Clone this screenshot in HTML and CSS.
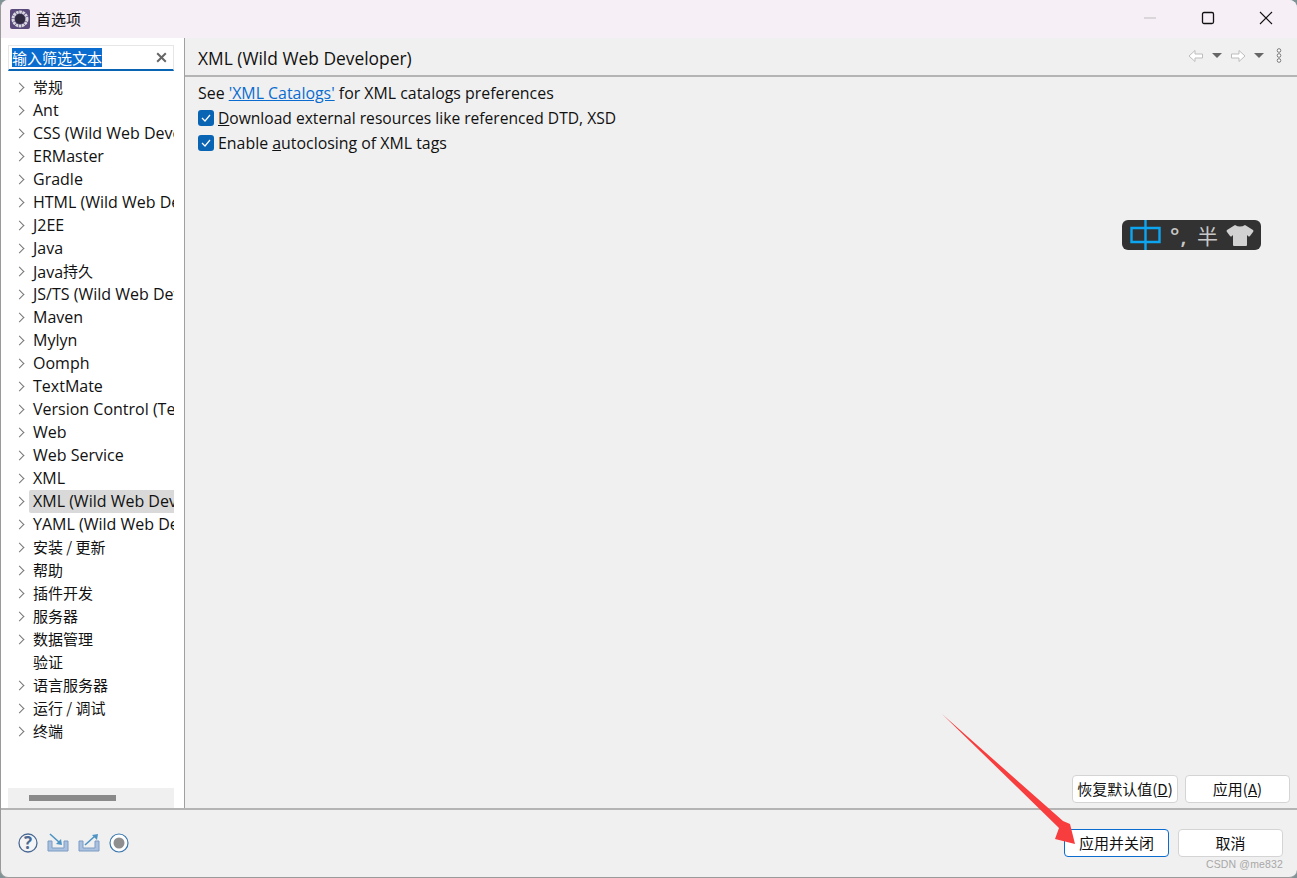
FILE: index.html
```html
<!DOCTYPE html>
<html lang="zh">
<head>
<meta charset="utf-8">
<title>首选项</title>
<link rel="stylesheet" href="styles.css">
</head>
<body>
<div class="window">
  <header class="titlebar">
    <svg class="app-icon" width="20" height="20" viewBox="0 0 20 20">
      <rect width="20" height="20" rx="2" fill="#5a4a7c"/>
      <circle cx="10" cy="10" r="7" fill="none" stroke="#d8d8de" stroke-width="3" stroke-dasharray="2.600 .6"/>
      <circle cx="10" cy="10" r="5" fill="#2f2a40"/>
    </svg>
    <span class="app-title">首选项</span>
    <div class="win-controls">
      <svg class="win-btn" width="14" height="14" viewBox="0 0 14 14"><path d="M1 7h12" stroke="#bdbdbd" stroke-width="1"/></svg>
      <svg class="win-btn" width="14" height="14" viewBox="0 0 14 14"><rect x="1.500" y="1.500" width="11" height="11" rx="1.500" fill="none" stroke="#111" stroke-width="1.300"/></svg>
      <svg class="win-btn" width="14" height="14" viewBox="0 0 14 14"><path d="M1 1l12 12M13 1L1 13" stroke="#111" stroke-width="1.100"/></svg>
    </div>
  </header>
  <div class="main">
    <aside class="sidebar">
      <div class="filter">
        <span class="filter-text">输入筛选文本</span>
        <svg class="filter-clear" width="11" height="11" viewBox="0 0 11 11"><path d="M1.200 1.200l8.600 8.600M9.800 1.200L1.200 9.800" stroke="#666" stroke-width="2"/></svg>
      </div>
      <ul class="tree">
        <li class="tree-row"><span class="chev"></span><span class="tree-label"><span class="cjk">常规</span></span></li>
        <li class="tree-row"><span class="chev"></span><span class="tree-label">Ant</span></li>
        <li class="tree-row"><span class="chev"></span><span class="tree-label">CSS (Wild Web Developer)</span></li>
        <li class="tree-row"><span class="chev"></span><span class="tree-label">ERMaster</span></li>
        <li class="tree-row"><span class="chev"></span><span class="tree-label">Gradle</span></li>
        <li class="tree-row"><span class="chev"></span><span class="tree-label">HTML (Wild Web Developer)</span></li>
        <li class="tree-row"><span class="chev"></span><span class="tree-label">J2EE</span></li>
        <li class="tree-row"><span class="chev"></span><span class="tree-label">Java</span></li>
        <li class="tree-row"><span class="chev"></span><span class="tree-label">Java<span class="cjk">持久</span></span></li>
        <li class="tree-row"><span class="chev"></span><span class="tree-label">JS/TS (Wild Web Developer)</span></li>
        <li class="tree-row"><span class="chev"></span><span class="tree-label">Maven</span></li>
        <li class="tree-row"><span class="chev"></span><span class="tree-label">Mylyn</span></li>
        <li class="tree-row"><span class="chev"></span><span class="tree-label">Oomph</span></li>
        <li class="tree-row"><span class="chev"></span><span class="tree-label">TextMate</span></li>
        <li class="tree-row"><span class="chev"></span><span class="tree-label">Version Control (Team)</span></li>
        <li class="tree-row"><span class="chev"></span><span class="tree-label">Web</span></li>
        <li class="tree-row"><span class="chev"></span><span class="tree-label">Web Service</span></li>
        <li class="tree-row"><span class="chev"></span><span class="tree-label">XML</span></li>
        <li class="tree-row is-selected"><span class="chev"></span><span class="tree-label">XML (Wild Web Developer)</span></li>
        <li class="tree-row"><span class="chev"></span><span class="tree-label">YAML (Wild Web Developer)</span></li>
        <li class="tree-row"><span class="chev"></span><span class="tree-label"><span class="cjk">安装 / 更新</span></span></li>
        <li class="tree-row"><span class="chev"></span><span class="tree-label"><span class="cjk">帮助</span></span></li>
        <li class="tree-row"><span class="chev"></span><span class="tree-label"><span class="cjk">插件开发</span></span></li>
        <li class="tree-row"><span class="chev"></span><span class="tree-label"><span class="cjk">服务器</span></span></li>
        <li class="tree-row"><span class="chev"></span><span class="tree-label"><span class="cjk">数据管理</span></span></li>
        <li class="tree-row"><span class="chev chev-none"></span><span class="tree-label"><span class="cjk">验证</span></span></li>
        <li class="tree-row"><span class="chev"></span><span class="tree-label"><span class="cjk">语言服务器</span></span></li>
        <li class="tree-row"><span class="chev"></span><span class="tree-label"><span class="cjk">运行 / 调试</span></span></li>
        <li class="tree-row"><span class="chev"></span><span class="tree-label"><span class="cjk">终端</span></span></li>
      </ul>
      <div class="hscroll"><div class="hscroll-thumb"></div></div>
    </aside>
    <section class="content">
      <div class="content-head">
        <h1 class="content-title">XML (Wild Web Developer)</h1>
        <div class="nav-tools">
          <svg width="16" height="14" viewBox="0 0 16 14"><path d="M1 7l6-5.500V5h7.500v4H7v3.500z" fill="#fff" stroke="#bdbdbd"/></svg>
          <span class="drop"></span>
          <svg width="16" height="14" viewBox="0 0 16 14"><path d="M15 7L9 1.500V5H1.500v4H9v3.500z" fill="#fff" stroke="#bdbdbd"/></svg>
          <span class="drop"></span>
          <svg class="kebab" width="6" height="15" viewBox="0 0 6 15"><g fill="#fff" stroke="#777"><circle cx="3" cy="2.500" r="1.800"/><circle cx="3" cy="7.500" r="1.800"/><circle cx="3" cy="12.500" r="1.800"/></g></svg>
        </div>
      </div>
      <div class="content-body">
        <p class="line">See <a class="link" href="#">'XML Catalogs'</a> for XML catalogs preferences</p>
        <label class="line check-line line-tight"><span class="check"><svg width="10" height="8" viewBox="0 0 10 8"><path d="M1 4l3 3 5-6" fill="none" stroke="#fff" stroke-width="1.200"/></svg></span><span><u>D</u>ownload external resources like referenced DTD, XSD</span></label>
        <label class="line check-line"><span class="check"><svg width="10" height="8" viewBox="0 0 10 8"><path d="M1 4l3 3 5-6" fill="none" stroke="#fff" stroke-width="1.200"/></svg></span><span>Enable <u>a</u>utoclosing of XML tags</span></label>
      </div>
      <div class="apply-row">
        <button class="btn btn-restore">恢复默认值(<u>D</u>)</button>
        <button class="btn">应用(<u>A</u>)</button>
      </div>
    </section>
  </div>
  <footer class="footer">
    <div class="foot-icons">
      <svg width="20" height="20" viewBox="0 0 20 20"><circle cx="10" cy="10" r="9" fill="#f4f4f6" stroke="#4a6a94" stroke-width="1.300"/><text class="help-mark" x="10" y="15.500" text-anchor="middle">?</text></svg>
      <svg width="22" height="20" viewBox="0 0 22 20"><path d="M1 8h4v7h12V8h4v10H1z" fill="#a9c0de" stroke="#7d9cc4"/><path d="M3 1l10 9" stroke="#4d93c4" stroke-width="1.600"/><path d="M15 12l-6-1 5-5z" fill="#4d93c4"/></svg>
      <svg width="22" height="20" viewBox="0 0 22 20"><path d="M1 8h4v7h12V8h4v10H1z" fill="#a9c0de" stroke="#7d9cc4"/><path d="M7 12l10-9" stroke="#4d93c4" stroke-width="1.600"/><path d="M20 1l-1 6-5-5z" fill="#4d93c4"/></svg>
      <svg width="20" height="20" viewBox="0 0 20 20"><circle cx="10" cy="10" r="9" fill="#fff" stroke="#3a78ad" stroke-width="1.200"/><circle cx="10" cy="10" r="5.500" fill="#8f8f8f"/></svg>
    </div>
    <div class="foot-buttons">
      <button class="btn btn-default">应用并关闭</button>
      <button class="btn">取消</button>
    </div>
  </footer>
</div>

<div class="ime">
  <svg width="32" height="30" viewBox="0 0 32 30"><path d="M1.500 8h28v14h-28zM15.500 0v30" fill="none" stroke="#0ea5f0" stroke-width="2.400"/></svg>
  <span class="ime-mark">°,</span>
  <span class="ime-half">半</span>
  <svg width="28" height="23" viewBox="0 0 28 23"><path d="M9 1q5 3 10 0l8 5q1 1 0 2l-3 4q-1 1-2 0l-1-1v10q0 1-1 1H8q-1 0-1-1V11l-1 1q-1 1-2 0L1 8q-1-1 0-2z" fill="#d2d2d2"/></svg>
</div>

<svg class="arrow" width="140" height="140" viewBox="0 0 140 140">
  <path d="M0 0 L121 107 L128 110 L133 130 L113 125 L117 114 Z" fill="#f73d3d"/>
</svg>

<span class="watermark">CSDN @me832</span>
</body>
</html>
```
FILE: styles.css
```css
* { box-sizing: border-box; }
html, body { margin: 0; padding: 0; }
body {
  width: 1297px;
  height: 878px;
  overflow: hidden;
  background: #7f9296;
  font-family: "Open Sans", "Noto Sans CJK SC", sans-serif;
  font-size: 15.9px;
  color: #111;
  position: relative;
}
.window {
  width: 1297px;
  height: 878px;
  display: flex;
  flex-direction: column;
  background: #f0f0f0;
  border-radius: 8px;
  overflow: hidden;
  border-left: 1px solid #9a9a9a;
  border-bottom: 1px solid #9a9a9a;
}
.titlebar {
  height: 38px;
  flex: none;
  display: flex;
  align-items: center;
  padding-left: 9px;
  background: #f6eff6;
}
.app-icon { flex: none; }
.app-title { margin: -2px 0 0 6px; font-size: 15px; font-family: "Noto Sans CJK SC", sans-serif; }
.win-controls { margin: -2px 0 0 auto; display: flex; gap: 44px; padding-right: 24px; align-items: center; }
.win-btn { display: block; }
.main { flex: 1; min-height: 0; display: flex; }
.sidebar {
  width: 184px;
  flex: none;
  background: #fff;
  border-right: 1px solid #a0a0a0;
  display: flex;
  flex-direction: column;
  padding: 7px 10px 0 7px;
}
.filter {
  height: 26px;
  flex: none;
  display: flex;
  align-items: center;
  justify-content: space-between;
  padding: 0 6px 0 3px;
  border: 1px solid #e6e6e6;
  border-bottom: 2px solid #0a64b4;
}
.filter-text {
  background: #0a6ccf;
  color: #fff;
  font-size: 15px;
  line-height: 19px;
  font-family: "Noto Sans CJK SC", sans-serif;
}
.filter-clear { display: block; }
.tree {
  list-style: none;
  margin: 5px 0 0;
  padding: 0;
  flex: 1;
  min-height: 0;
  overflow: hidden;
}
.tree-row {
  height: 23px;
  display: flex;
  align-items: center;
  white-space: nowrap;
  overflow: hidden;
  font-size: 16px;
}
.cjk { display: inline-block; font-size: 15px; font-family: "Noto Sans CJK SC", sans-serif; transform: translateY(-1px); }
.chev {
  flex: none;
  width: 7px;
  height: 7px;
  margin: 0 7px 0 7px;
  border-top: 1.4px solid #777;
  border-right: 1.4px solid #777;
  transform: rotate(45deg);
  position: relative;
  left: 1px;
}
.chev-none { border: 0; }
.tree-label { flex: 1; min-width: 0; padding-left: 4px; line-height: 23px; height: 23px; overflow: hidden; }
.is-selected .tree-label { background: #d9d9d9; border-radius: 2px 0 0 2px; }
.hscroll {
  height: 20px;
  flex: none;
  background: #f0f0f0;
  padding: 7px 0 0 21px;
}
.hscroll-thumb { width: 87px; height: 6px; background: #8a8a8a; }
.content { flex: 1; min-width: 0; display: flex; flex-direction: column; }
.content-head {
  height: 39px;
  flex: none;
  display: flex;
  align-items: center;
  justify-content: space-between;
  padding: 2px 15px 0 13px;
  border-bottom: 2px solid #b4b4b4;
}
.content-title { margin: 0; font-size: 17.4px; font-weight: 400; }
.nav-tools { display: flex; align-items: center; gap: 8px; margin-top: -4px; }
.drop {
  width: 0;
  height: 0;
  border-left: 5px solid transparent;
  border-right: 5px solid transparent;
  border-top: 5px solid #666;
}
.kebab { margin-left: 4px; }
.content-body { flex: 1; padding: 3px 13px 0; }
.line { margin: 0; height: 25px; display: flex; align-items: center; white-space: pre; }
.line-tight { font-size: 15.6px; }
.link { color: #0a6ccf; }
.check-line { gap: 4px; }
.check {
  width: 16px;
  height: 16px;
  background: #0a64b4;
  border-radius: 3px;
  display: flex;
  align-items: center;
  justify-content: center;
}
.apply-row { display: flex; justify-content: flex-end; gap: 7px; padding: 0 7px 5px 0; }
.btn {
  width: 105px;
  height: 28px;
  background: #fff;
  border: 1px solid #d4d4d4;
  border-radius: 4px;
  font-family: "Noto Sans CJK SC", "Open Sans", sans-serif;
  font-size: 15px;
  line-height: 24px;
  color: #111;
  padding: 0 0 1px;
}
.btn-restore { width: 106px; }
.btn-default { border-color: #0a6ccf; }
.footer {
  height: 69px;
  flex: none;
  display: flex;
  align-items: flex-start;
  justify-content: space-between;
  border-top: 2px solid #b4b4b4;
  padding: 19px 14px 0 17px;
}
.foot-icons { display: flex; gap: 9px; padding-top: 4px; }
.help-mark { font-size: 17px; font-weight: 700; fill: #4a6a94; }
.foot-buttons { display: flex; gap: 9px; }
.ime {
  position: absolute;
  left: 1122px;
  top: 220px;
  width: 139px;
  height: 30px;
  background: #323232;
  border-radius: 6px;
  display: flex;
  align-items: center;
  padding-left: 8px;
  color: #c8c8c8;
}
.ime-mark { margin-left: 8px; font-size: 22px; font-weight: 600; letter-spacing: 1px; line-height: 30px; width: 27px; }
.ime-half { font-size: 21px; width: 29px; font-family: "Noto Sans CJK SC", sans-serif; }
.arrow { position: absolute; left: 942px; top: 714px; }
.watermark {
  position: absolute;
  right: 14px;
  top: 858px;
  font-family: "Liberation Sans", sans-serif;
  font-size: 10.5px;
  letter-spacing: 0.15px;
  color: #a8a8a8;
}
```
